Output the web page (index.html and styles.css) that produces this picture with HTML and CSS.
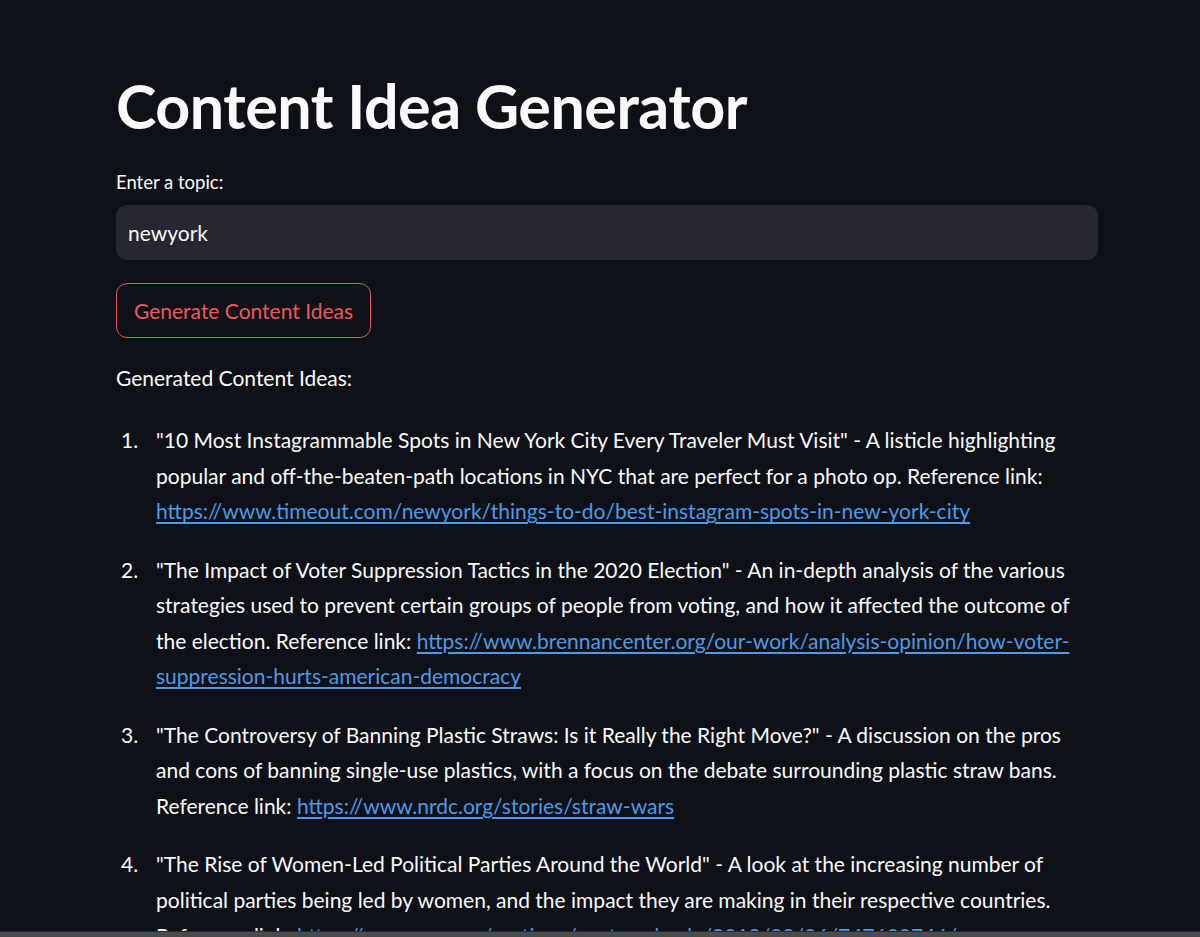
FILE: index.html
```html
<!DOCTYPE html>
<html lang="en">
<head>
<meta charset="utf-8">
<title>Content Idea Generator</title>
<link rel="stylesheet" href="styles.css">
</head>
<body>
<main class="app">
  <h1 class="title">Content Idea Generator</h1>

  <label class="field-label" for="topic">Enter a topic:</label>
  <div class="field">
    <input id="topic" class="text-input" type="text" value="newyork">
  </div>

  <button class="btn" type="button">Generate Content Ideas</button>

  <p class="result-head">Generated Content Ideas:</p>

  <ol class="ideas">
    <li>"10 Most Instagrammable Spots in New York City Every Traveler Must Visit" - A listicle highlighting popular and off-the-beaten-path locations in NYC that are perfect for a photo op. Reference link: <a href="#">https://www.timeout.com/newyork/things-to-do/best-instagram-spots-in-new-york-city</a></li>
    <li>"The Impact of Voter Suppression Tactics in the 2020 Election" - An in-depth analysis of the various strategies used to prevent certain groups of people from voting, and how it affected the outcome of the election. Reference link: <a href="#">https://www.brennancenter.org/our-work/analysis-opinion/how-voter-suppression-hurts-american-democracy</a></li>
    <li>"The Controversy of Banning Plastic Straws: Is it Really the Right Move?" - A discussion on the pros and cons of banning single-use plastics, with a focus on the debate surrounding plastic straw bans. Reference link: <a href="#">https://www.nrdc.org/stories/straw-wars</a></li>
    <li>"The Rise of Women-Led Political Parties Around the World" - A look at the increasing number of political parties being led by women, and the impact they are making in their respective countries. Reference link: <a href="#">https://www.npr.org/sections/goatsandsoda/2019/09/06/747600746/women-are-leading-political-parties</a></li>
  </ol>
</main>
<div class="window-edge"></div>
</body>
</html>
```

FILE: styles.css
```css
* { box-sizing: border-box; }

html, body {
  margin: 0;
  padding: 0;
  background: #0e1117;
  color: #fafafa;
  font-family: Lato, "Noto Sans", "Liberation Sans", sans-serif;
  overflow: hidden;
  height: 100%;
}

.app {
  width: 982px;
  margin-left: 116px;
  padding-top: 68px;
}

.title {
  margin: 0;
  font-size: 61px;
  font-weight: 700;
  line-height: 76px;
  letter-spacing: -0.5px;
}

.field-label {
  display: block;
  margin-top: 24px;
  font-size: 18.5px;
  line-height: 28px;
}

.field {
  margin-top: 9px;
  height: 55px;
  background: #262730;
  border-radius: 11px;
  display: flex;
  align-items: center;
  padding: 0 12px;
}

.text-input {
  width: 100%;
  background: transparent;
  border: 0;
  outline: none;
  color: #fafafa;
  font-family: inherit;
  font-size: 21px;
  padding: 0;
}

.btn {
  display: block;
  margin-top: 23px;
  height: 55px;
  padding: 0 17px;
  background: #0e1117;
  border: 1.4px solid #e8545a;
  border-radius: 11px;
  color: #f0575c;
  font-family: inherit;
  font-size: 21px;
}

.result-head {
  margin: 22px 0 0;
  font-size: 21px;
  line-height: 36px;
}

.ideas {
  counter-reset: idea;
  list-style: none;
  margin: 26px 0 0;
  padding-left: 40px;
  font-size: 21px;
  line-height: 35.6px;
}

.ideas li {
  counter-increment: idea;
  margin-bottom: 22.8px;
}

/* numbers sit a little away from the item text */
.ideas li::before {
  content: counter(idea) ".";
  display: inline-block;
  width: 35px;
  margin-left: -35px;
}

.ideas a {
  color: #4a9be8;
  text-decoration: underline;
  text-underline-offset: 3px;
}

.window-edge {
  position: fixed;
  left: 0;
  right: 0;
  bottom: 0;
  height: 6px;
  background: #4b4b4b;
  border-top: 1px solid #2a2a2a;
}
```
